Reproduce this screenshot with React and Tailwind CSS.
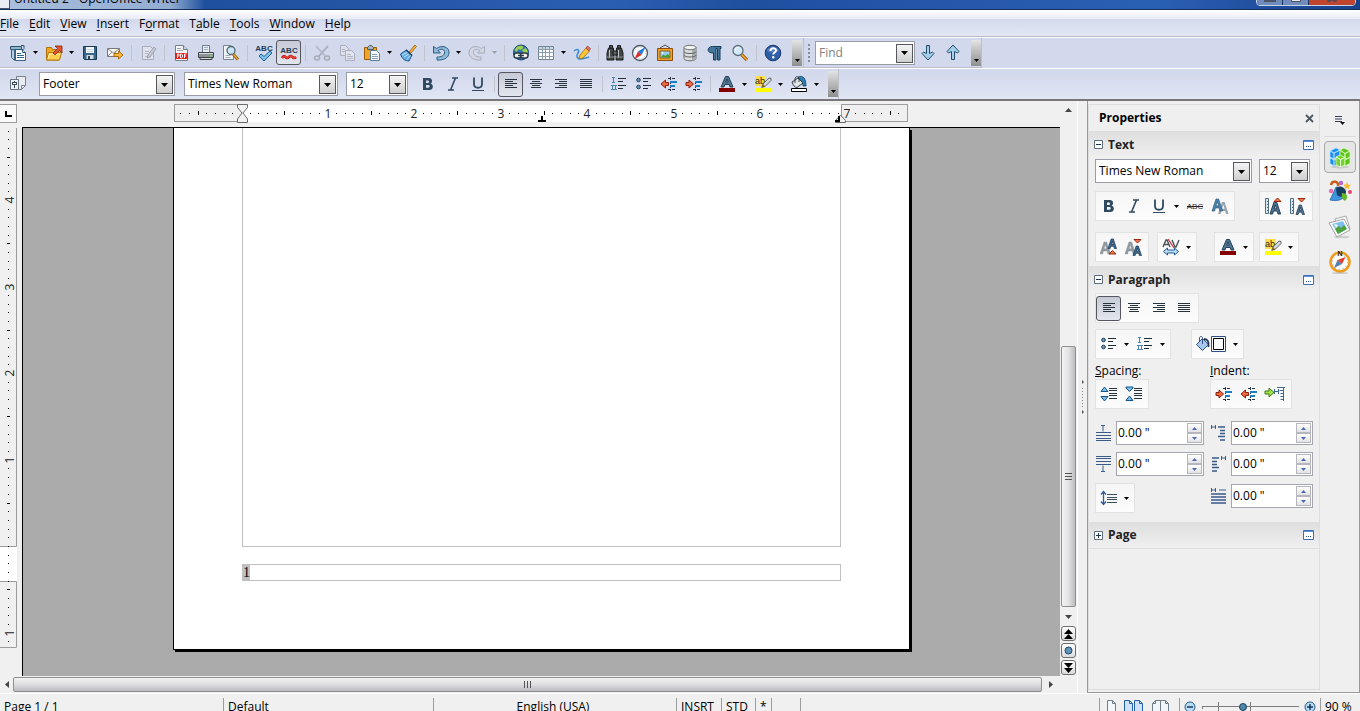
import { useState } from "react";

/* ---------- icons ---------- */

function Svg({ children, w = 18, h = 18 }) {
  return (
    <svg width={w} height={h} viewBox={`0 0 ${w} ${h}`} fill="none" className="block shrink-0" aria-hidden="true">
      {children}
    </svg>
  );
}

const NAVY = "#1f3d58";

const NewDoc = () => (
  <Svg>
    <path d="M6.500 5.500h7l3 3v8h-10z" fill="#fff" stroke="#3c6480" />
    <path d="M13.500 5.500v3h3" fill="#c3d6e3" stroke="#3c6480" />
    <path d="M1.500 2.500h11v3h-11z" fill="#8fb3cc" stroke="#2f556f" />
    <path d="M2.500 6v7.500l3 3v-11z" fill="#b8cfdf" stroke="#3c6480" />
    <path d="M8 9.500h4M8 11.500h7M8 13.500h7" stroke="#2d6a92" />
    <path d="M12 1.500h3v3l-2 2" stroke="#2f556f" />
  </Svg>
);
const OpenFolder = () => (
  <Svg>
    <path d="M1.500 16v-12.500h5l1 2h6.500v10.500z" fill="#f2a81d" stroke="#b06f08" />
    <path d="M1.500 16l2-7.500h13l-2 7.500z" fill="#fdcf4e" stroke="#b87a0e" />
    <path d="M3 14.500L4.500 10h10" stroke="#fff0b0" />
    <path d="M8 9l4.500-4.500-2.500-2.500h7v7l-2.500-2.500L10 11z" fill="#e2562d" stroke="#8c2208" strokeWidth=".8" />
  </Svg>
);
const Save = () => (
  <Svg>
    <path d="M2.500 2.500h13v13h-12l-1-1z" fill="#376788" stroke="#173a54" />
    <path d="M5 3h8v6H5z" fill="#f3f7fa" />
    <path d="M6 5.500h6M6 7.500h6" stroke="#c9d5de" />
    <path d="M5.500 11h7v4h-7z" fill="#d4dade" />
    <path d="M7 12h2v3H7z" fill="#24445c" />
  </Svg>
);
const Mail = () => (
  <Svg>
    <path d="M1.500 4.500h12v8h-12z" fill="#f7f4ee" stroke="#77797c" />
    <path d="M2 5l5.500 4L13 5M2 12l4-4M13 12L9 8" stroke="#8b8d90" />
    <path d="M8 9.500h4.500v-2.500l4.500 4-4.500 4v-2.500H8z" fill="#f9b83a" stroke="#ad6b09" />
  </Svg>
);
const EditDoc = () => (
  <Svg>
    <path d="M3.500 2.500h8l3 3v10h-11z" fill="#dfe2ee" stroke="#a9adba" />
    <path d="M6 7.500h4M6 9.500h3M6 12.500h4" stroke="#b3b7c4" />
    <path d="M15 3l2 2-6 8-3 1 1-3z" fill="#c7cad5" stroke="#9da1ae" />
  </Svg>
);
const Pdf = () => (
  <Svg>
    <path d="M3.500 1.500h8l4 4v11h-12z" fill="#f4f6f8" stroke="#72808c" />
    <path d="M11.500 1.500v4h4" fill="#cbd6de" stroke="#72808c" />
    <path d="M5 4.500h4M5 6.500h6" stroke="#9aa7b1" />
    <path d="M3 9h13v6H3z" fill="#e01f1f" />
    <path d="M5.500 14v-4h1.500v2H6M8.500 10v4h1l1-1v-2l-1-1zM12.500 14v-4h2M12.500 12h1.500" stroke="#fff" strokeWidth=".9" />
  </Svg>
);
const Printer = () => (
  <Svg>
    <path d="M5.500 8V1.500h7V8" fill="#e9f0f5" stroke="#6c7c88" />
    <path d="M7 3.500h4M7 5.500h4" stroke="#9fb0bc" />
    <path d="M1.500 8.500h15v5h-15z" fill="#8d9499" stroke="#3d4549" />
    <path d="M3 13.500h12v2H3z" fill="#d5d8da" stroke="#3d4549" />
    <path d="M2 9.500h14" stroke="#d8dcde" />
    <circle cx="14" cy="12" r="1" fill="#6de03a" />
  </Svg>
);
const Preview = () => (
  <Svg>
    <path d="M1.500 1.500h7l3 3v11h-10z" fill="#f1f5f8" stroke="#75848f" />
    <path d="M3.500 11.500h5M3.500 13.500h5" stroke="#a1afb9" />
    <path d="M11 10l5 5.500" stroke="#8a5a0c" strokeWidth="3" />
    <path d="M11 10l5 5.500" stroke="#f0a62c" strokeWidth="1.500" />
    <circle cx="9" cy="6.500" r="4" fill="#c9e4f5" stroke="#52656f" strokeWidth="1.300" />
  </Svg>
);
const SpellCheck = () => (
  <Svg>
    <text x="9" y="7" textAnchor="middle" fontSize="8" fontWeight="700" fill={NAVY} fontFamily="Liberation Sans, sans-serif">ABC</text>
    <path d="M4 12l2-2 3 2.500L15 7l2 2-8 8z" fill="#7fc2ef" stroke="#1c5a8e" />
  </Svg>
);
const AutoSpell = () => (
  <Svg>
    <text x="9" y="9" textAnchor="middle" fontSize="8" fontWeight="700" fill={NAVY} fontFamily="Liberation Sans, sans-serif">ABC</text>
    <path d="M2 14q2-3 3.500-1t3.500 0 3.500 0 3.500 0" stroke="#b01010" strokeWidth="2.600" />
    <path d="M2 14q2-3 3.500-1t3.500 0 3.500 0 3.500 0" stroke="#f03b2b" strokeWidth="1.300" />
  </Svg>
);
const Cut = () => (
  <Svg>
    <path d="M3 2l9 10M15 2L6 12" stroke="#a7abba" strokeWidth="1.800" />
    <path d="M3 2l9 10" stroke="#d7dae6" strokeWidth=".6" />
    <ellipse cx="4" cy="14" rx="2.500" ry="2" stroke="#a7abba" strokeWidth="1.500" />
    <ellipse cx="14" cy="14" rx="2.500" ry="2" stroke="#a7abba" strokeWidth="1.500" />
  </Svg>
);
const Copy = () => (
  <Svg>
    <path d="M2.500 1.500h5l3 3v7h-8z" fill="#dcdfeb" stroke="#a9adbc" />
    <path d="M7.500 6.500h6l3 3v7h-9z" fill="#e2e5f0" stroke="#a9adbc" />
    <path d="M4 5.500h3M4 7.500h3M9 10.500h4M9 12.500h6M9 14.500h6" stroke="#b3b7c4" />
  </Svg>
);
const Paste = () => (
  <Svg>
    <path d="M1.500 3.500h12v12h-12z" fill="#f0a52a" stroke="#9a5f08" />
    <path d="M4.500 5.500v-2l2-2h2l2 2v2z" fill="#a7b6bf" stroke="#4c5a63" />
    <path d="M7.500 6.500h6l3 3v7h-9z" fill="#f6f9fb" stroke="#5f7c90" />
    <path d="M9 10.500h5M9 12.500h6M9 14.500h6" stroke="#86a0b2" />
  </Svg>
);
const Brush = () => (
  <Svg>
    <path d="M10 8l6-7 1.500 1.500-6 7z" fill="#f5ad36" stroke="#9c6207" strokeWidth=".8" />
    <path d="M1.500 10l6-4 5.500 5-3 6c-4 0-7-2-8.500-7z" fill="#62ace4" stroke="#1c548a" />
    <path d="M3 11l6-3M5 13l5.500-3.500M8 15.500L12 11" stroke="#c5e2f7" />
    <path d="M7 6l6 5.500" stroke="#1c3f66" strokeWidth="1.500" />
  </Svg>
);
const arrowBack = "M1.500 2.500v6.500h7L6 6.500c4-2.500 7-1 6.500 2.500-.5 3-3.500 4-7.500 4v3c6.500.5 11.500-2 12-7 .5-6-7-8.500-12.500-4.500z";
const Undo = () => (
  <Svg>
    <path d={arrowBack} fill="#8fbad8" stroke="#2b5d84" />
  </Svg>
);
const Redo = () => (
  <Svg>
    <g transform="translate(18) scale(-1 1)">
      <path d={arrowBack} fill="#d3d7e3" stroke="#a8acba" />
    </g>
  </Svg>
);
const Globe = () => (
  <Svg>
    <circle cx="9" cy="8.500" r="7.500" fill="#2f77b6" stroke="#1a466f" />
    <path d="M2.500 6c2-4 5-5 8-4l1 2-3 2-2-1-2 3zM10 6l4-2 2 4-2.500 3z" fill="#9ed04a" />
    <rect x="2" y="9" width="7.500" height="5" rx="2.500" fill="#f2f2f2" stroke="#2c3b44" strokeWidth="1.400" />
    <rect x="8.500" y="9" width="7.500" height="5" rx="2.500" fill="#f2f2f2" stroke="#2c3b44" strokeWidth="1.400" />
    <path d="M6 11.500h6" stroke="#2c3b44" strokeWidth="1.500" />
  </Svg>
);
const TableIcon = () => (
  <Svg>
    <path d="M1.500 2.500h15v13h-15z" fill="#fff" stroke="#6f8595" />
    <path d="M2 3h14v3H2z" fill="#c5d4df" />
    <path d="M1.500 5.500h15M1.500 8.500h15M1.500 12.500h15M5.500 2.500v13M8.500 2.500v13M12.500 2.500v13" stroke="#8b9fad" />
  </Svg>
);
const Draw = () => (
  <Svg>
    <path d="M1 7c3-3 6-1 4 2s-1 6 2 6 5-1 9-2" stroke="#3c8fd6" strokeWidth="1.600" />
    <path d="M7 11l6-7 3.500 3-6.500 7-4 1z" fill="#fbc638" stroke="#9d6a08" strokeWidth=".8" />
    <path d="M13 4l1.500-2 3 2.500-1.500 2.500z" fill="#e86f62" stroke="#8f2c1f" strokeWidth=".6" />
  </Svg>
);
const Binoculars = () => (
  <Svg>
    <path d="M2.500 4h5l.5 12H1V9zM15.500 4h-5L10 16h7V9z" fill="#454849" stroke="#191b1c" />
    <path d="M3.500 1.500h3V4h-3zM11.500 1.500h3V4h-3zM7 7h4v4H7z" fill="#5e6263" stroke="#191b1c" />
    <path d="M3.500 6v8M12.500 6v8" stroke="#c4c8c9" />
    <path d="M1 13h7M10 13h7" stroke="#898c8d" />
  </Svg>
);
const Compass = () => (
  <Svg>
    <circle cx="9" cy="9" r="7.500" fill="#fbfcfd" stroke="#4d5a63" strokeWidth="1.300" />
    <circle cx="9" cy="9" r="5.800" stroke="#b8c4cc" strokeDasharray="1 2" />
    <path d="M14.500 3L7 7.500l3.500 3.500z" fill="#1f7be0" />
    <path d="M3.500 15L7 7.500l3.500 3.500z" fill="#dc2a20" />
  </Svg>
);
const Gallery = () => (
  <Svg>
    <path d="M4 4l5-3 5 3" stroke="#4f4f4f" />
    <path d="M1.500 4.500h15v12h-15z" fill="#eda334" stroke="#8c4f05" />
    <path d="M4 7h10v7H4z" fill="#8fcbf2" stroke="#9a5b08" />
    <path d="M4.500 13.500l3-3 2 1.500 2-2 2.500 2v1.500z" fill="#4a9a2b" />
    <circle cx="6.500" cy="8.800" r="1" fill="#fff" />
  </Svg>
);
const Database = () => (
  <Svg>
    <path d="M3 3.500v11c0 3 12 3 12 0v-11" fill="#dcdddd" stroke="#6e7172" />
    <path d="M11 4v12.500c2-.4 4-1 4-2v-11z" fill="#a8abac" />
    <ellipse cx="9" cy="3.500" rx="6" ry="2.200" fill="#f4f5f5" stroke="#6e7172" />
    <path d="M3 7.500c0 2.700 12 2.700 12 0M3 11c0 2.700 12 2.700 12 0" stroke="#5f6263" />
  </Svg>
);
const Pilcrow = () => (
  <Svg>
    <path d="M6.500 2.500H15v2h-1v11.500h-2.500V4.500h-1.500v11.500H7.500V9C0 9.500 1 2.500 6.500 2.500z" fill="#44779e" stroke="#173a58" />
  </Svg>
);
const Zoom = () => (
  <Svg>
    <path d="M10.500 10.500l5.500 5.500" stroke="#8f5b0a" strokeWidth="3.200" />
    <path d="M10.500 10.500l5.500 5.500" stroke="#f3aa30" strokeWidth="1.600" />
    <circle cx="7" cy="6.500" r="5" fill="#d4eafa" stroke="#5c6f7c" strokeWidth="1.300" />
    <path d="M4 6c.5-2 2-2.500 3.500-2.500" stroke="#fff" />
  </Svg>
);
const Help = () => (
  <Svg>
    <circle cx="9" cy="9" r="7.800" fill="#2f5ea9" stroke="#18376c" />
    <path d="M3 7c1-5 11-5 12 0-4 2-8 2-12 0z" fill="#7396cc" opacity=".6" />
    <path d="M6.500 7c0-3.500 5.500-3.500 5.500-.5 0 2-2.800 2-2.800 4" stroke="#fff" strokeWidth="1.900" />
    <circle cx="9.200" cy="13.200" r="1.200" fill="#fff" />
  </Svg>
);
const FindArrow = ({ up }) => (
  <Svg>
    <g transform={up ? "translate(0 17) scale(1 -1)" : undefined}>
      <path d="M7.500 1.500h3v8l3-1.500 1.500 1.500-6 6.500-6-6.500L4.500 8l3 1.500z" fill="#a5d0ec" stroke="#234c69" />
    </g>
  </Svg>
);
const StylesIcon = () => (
  <Svg>
    <path d="M7.500 1.500h9v9l-4 4h-5z" fill="#e8ecf1" stroke="#76838e" />
    <path d="M12.500 14.500v-4h4" stroke="#76838e" />
    <path d="M1.500 4.500h8v10h-8z" fill="#eef2f5" stroke="#66747f" />
    <path d="M3 7h5v3H3zM5 6h1v7H5z" fill="#3e4c57" />
    <path d="M4 8h3v1H4z" fill="#fff" />
  </Svg>
);
const Bold = () => (
  <Svg>
    <path fillRule="evenodd" d="M4 3h6c3.500 0 4 4.500 1.500 5.500C15 9.500 14.500 15 10.500 15H4zM7 5.500v2.500h2c1.600 0 1.600-2.500 0-2.500zM7 10v2.700h2.400c1.700 0 1.700-2.700 0-2.700z" fill="#2f4a60" />
  </Svg>
);
const Italic = () => (
  <Svg>
    <path d="M8 3h6M4 15h6M11.500 3L6.500 15" stroke="#2f4a60" strokeWidth="1.600" />
  </Svg>
);
const Underline = () => (
  <Svg>
    <path d="M5 2.500v6.500c0 5 8 5 8 0V2.500" stroke="#2f4a60" strokeWidth="1.800" />
    <path d="M3 15.500h12" stroke="#2f4a60" />
  </Svg>
);

const ALIGN_ROWS = {
  left: [[3, 15], [3, 11], [3, 15], [3, 11], [3, 15]],
  center: [[3, 15], [5, 13], [3, 15], [5, 13], [4, 14]],
  right: [[3, 15], [7, 15], [3, 15], [7, 15], [3, 15]],
  justify: [[3, 15], [3, 15], [3, 15], [3, 15], [3, 15]],
};
const Align = ({ kind }) => (
  <Svg>
    {ALIGN_ROWS[kind].map(([a, b], i) => (
      <path key={i} d={`M${a} ${4.5 + i * 2}H${b}`} stroke="#26333d" strokeWidth="1" />
    ))}
  </Svg>
);
const Numbering = () => (
  <Svg>
    <path d="M2 2.500h3M3.500 2.500v5M2 7.500h3M1 10.500h6M1 14.500h6M2.500 10.500v4M5.500 10.500v4" stroke="#4b83ab" />
    <path d="M8 3.500h8M8 6.500h5M8 10.500h8M8 13.500h5" stroke="#1d2b35" />
  </Svg>
);
const Bullets = () => (
  <Svg>
    <circle cx="3.500" cy="5" r="1.800" fill="#6a9fc4" stroke="#1b3a52" />
    <circle cx="3.500" cy="12" r="1.800" fill="#6a9fc4" stroke="#1b3a52" />
    <path d="M8 3.500h8M8 6.500h5M8 10.500h8M8 13.500h5" stroke="#1d2b35" />
  </Svg>
);
const Indent = ({ dir }) => (
  <Svg>
    <path d="M8 3.500h8M8 14.500h8M10.500 2v14" stroke="#26333d" strokeDasharray="3 1" />
    <path d="M10 7h7M10 11h5" stroke="#1b7fc4" strokeWidth="2" />
    <path d={dir === "in" ? "M1 7.500h3V5l4.500 4L4 13v-2.500H1z" : "M8.500 7.500H5.500V5L1 9l4.500 4v-2.500h3z"} fill="#ee6a42" stroke="#8c1f0a" />
  </Svg>
);
const FontColor = () => (
  <Svg>
    <path d="M3 12L7.500 1.500h3L15 12h-3l-.8-2.500H6.800L6 12zM7.800 7h2.400L9 3.800z" fill="#4f7796" stroke="#183249" strokeWidth=".9" />
    <path d="M1 13h16v4H1z" fill="#840000" />
  </Svg>
);
const Highlight = () => (
  <Svg>
    <path d="M1 1h11v10H1z" fill="#ffe04a" />
    <path d="M1 13h16v4H1z" fill="#ffff00" />
    <text x="1" y="9" fontSize="9" fill="#222" fontFamily="Liberation Sans, sans-serif">ab</text>
    <path d="M8 12l1-3 6-6 2 .5v2l-6 6z" fill="#d6d9db" stroke="#4f575c" strokeWidth=".9" />
    <path d="M7 13l2-4 2.500 2.500z" fill="#8a6d1c" />
  </Svg>
);
const BackColor = () => (
  <Svg>
    <path d="M8 2c5-2 8 1 8 9h-3c0-3-1-5-3-6z" fill="#2d7fb8" stroke="#133f60" strokeWidth=".8" />
    <path d="M2 7l6-4 5 5-6 4.500c-2 0-4-2-5-5.500z" fill="#dfe3e6" stroke="#363e43" />
    <path d="M5 8V4c0-3 4-3 4 0v3" stroke="#363e43" />
    <path d="M1.500 13.500h15v3h-15z" fill="#fff" stroke="#000" />
  </Svg>
);
const Strike = () => (
  <Svg>
    <text x="9" y="12" textAnchor="middle" fontSize="8" fill="#333" fontFamily="Liberation Sans, sans-serif">ABC</text>
    <path d="M1 9.500h16" stroke="#222" />
  </Svg>
);
const letterA = "M0 12L4 0h2.600L10.600 12H8L7.200 9H3.400L2.600 12zM4 6.800h2.600L5.300 2.800z";
const Shadow = () => (
  <Svg>
    <path transform="translate(7 5)" d={letterA} fill="#9aa5ad" />
    <path transform="translate(1 2)" d={letterA} fill="#4a83ad" stroke="#274f6d" strokeWidth=".6" />
  </Svg>
);
const GrowFont = ({ down }) => (
  <Svg>
    <path d="M1.500 1.500h3v15h-3z" fill="#dce7ee" stroke="#4d6f86" />
    <path d="M3 4.500h1M3 7.500h1M3 10.500h1M3 13.500h1" stroke="#4d6f86" />
    <path transform={down ? "translate(7 8) scale(.8)" : "translate(6 5)"} d={letterA} fill="#4f7796" stroke="#183249" strokeWidth=".9" />
    <path d={down ? "M9 1.500h7l-3.500 3.500z" : "M10 4.500h7l-3.500-3.500z"} fill="#f2784c" stroke="#a02a0c" />
  </Svg>
);
const Script = ({ down }) => (
  <Svg>
    <path transform="translate(0 4)" d={letterA} fill="#8f989f" stroke="#8f989f" strokeWidth=".5" />
    <path transform={down ? "translate(8 8) scale(.8)" : "translate(8 1) scale(.8)"} d={letterA} fill="#3b6f98" stroke="#183249" strokeWidth=".9" />
    <path d={down ? "M9 1.500h7l-3.500 3.500z" : "M9 16h7l-3.500-3.500z"} fill="#f2784c" stroke="#a02a0c" />
  </Svg>
);
const Kerning = () => (
  <Svg>
    <path d="M1 9l3-7h1l3 7M2.500 6.500h4M10 2l3 7h1l3-7" stroke="#46515a" strokeWidth="1.400" />
    <path d="M6 1l6 9" stroke="#d8262c" strokeWidth="1.200" />
    <path d="M1.500 13.500l4-3.500v2h7v-2l4 3.500-4 3.500v-2h-7v2z" fill="#bcdcf4" stroke="#225b93" />
  </Svg>
);
const FillBucket = () => (
  <Svg w={32}>
    <path d="M1.500 9.500l6-6 6 6-6 6z" fill="#a8c8f0" stroke="#2f5687" />
    <path d="M7.500 9V3c0-2-3-2-3 0v3" stroke="#2f5687" />
    <path d="M9 4c4 0 5 3 4.500 8" stroke="#223a55" strokeWidth="1.800" />
    <path d="M16.500 1.500h14v15h-14z" fill="#fff" stroke="#2f4f8a" />
    <path d="M18.500 3.500h10v11h-10z" stroke="#000" />
  </Svg>
);
const ParaSpacing = ({ dec }) => (
  <Svg>
    <path d={dec ? "M1 2h7v1L4.500 6.500 1 3z" : "M1 6.500L4.500 2 8 6.500z"} fill="#7cbdec" stroke="#155489" />
    <path d={dec ? "M1 15.500L4.500 11 8 15.500z" : "M1 11.500h7L4.500 16z"} fill="#7cbdec" stroke="#155489" />
    <path d="M9 3.500h8M9 5.500h8M9 8.500h8M9 10.500h8M9 13.500h8" stroke="#26333d" />
  </Svg>
);
const HangIndent = () => (
  <Svg w={22}>
    <path d="M1 6h4V3l5 4.500L5 12V9H1z" fill="#9fe04a" stroke="#3c7d0c" />
    <path d="M10.500 4v5M10.500 6.500h4M14.500 4v5M13 2.500h8M19.500 2v14M15.500 5.500h4M16.500 8.500h3M16.500 11.500h3M16.500 14.500h3" stroke="#3d6893" />
  </Svg>
);
const SpaceAbove = ({ below }) => (
  <Svg>
    <g transform={below ? "translate(0 18) scale(1 -1)" : undefined}>
      <path d="M6 1.500h4M8 1.500v6" stroke="#34608f" />
      <path d="M1 8.500h15M1 11.500h15M1 14.500h15M1 16.500h15" stroke="#3a5a8a" />
    </g>
  </Svg>
);
const BeforeText = ({ after }) => (
  <Svg>
    <g transform={after ? "translate(17) scale(-1 1)" : undefined}>
      <path d="M1.500 1v4M1.500 3h4M5.500 1v4" stroke="#34608f" />
      <path d="M8 3h7M10 6.500h5M10 9.500h5M8 12.500h7M10 16h5" stroke="#3a5a8a" strokeWidth="1.500" />
    </g>
  </Svg>
);
const FirstLine = () => (
  <Svg>
    <path d="M1.500 1v4M1.500 3h4M5.500 1v4M9 3h7" stroke="#34608f" />
    <path d="M1 7h15M1 10h15M1 13h15M1 16h15" stroke="#3a5a8a" strokeWidth="1.500" />
  </Svg>
);
const LineSpacing = () => (
  <Svg>
    <path d="M3.500 3v12M1 5.500l2.500-3 2.500 3M1 12.500l2.500 3 2.500-3" stroke="#2c5f98" strokeWidth="1.300" />
    <path d="M7 5.500h10M7 8.500h10M7 10.500h10M7 13.500h10" stroke="#3d4e5b" />
  </Svg>
);

/* tab bar icons, 24px */
const Cubes = () => (
  <Svg w={24} h={24}>
    <ellipse cx="12" cy="22" rx="9" ry="1.500" fill="#c9c9c9" />
    <path d="M2 6l6-3 4 2-6 3zM2 6l4 2v6l-4-2zM6 8l6-3v6l-6 3z" fill="#1b8ff0" stroke="#bfe2ff" strokeWidth=".7" />
    <path d="M12 5l4-2 6 3-5 2.500zM12 5l5 3.500v5.500l-5-3zM17 8.500L22 6v6l-5 2.500z" fill="#5cc41c" stroke="#e0ffc4" strokeWidth=".7" />
    <path d="M2 13l4 2v6l-4-2.500zM6 15l3-1.500v6.500L6 21z" fill="#1b8ff0" stroke="#bfe2ff" strokeWidth=".7" />
    <path d="M8 12l4-2 5 2.500-4.500 2zM8 12l4.500 2.500V22L8 20zM12.500 14.500l4.500-2v7.500l-4.500 2z" fill="#72d42c" stroke="#efffdc" strokeWidth=".7" />
    <path d="M17 15l5-2.500v6l-5 2.500z" fill="#5cc41c" stroke="#e0ffc4" strokeWidth=".7" />
  </Svg>
);
const StylesTab = () => (
  <Svg w={24} h={24}>
    <path d="M2 20L8 7c5 0 9 6 7 11-3 3-9 3-13 2z" fill="#3e95dc" stroke="#1a5a99" strokeWidth=".7" />
    <path d="M8 9c2-5 10-2 10 3s-6 6-9 3z" fill="#173d60" />
    <path d="M14 13c5 0 7 4 3 8-2-1-4-3-3-8z" fill="#69b52c" />
    <path d="M3 5c1-5 8-4 7 1" stroke="#c95d18" strokeWidth="2.500" />
    <circle cx="13" cy="3" r="2.200" fill="#b565d8" />
    <circle cx="3" cy="11" r="2.200" fill="#ee6fb1" />
    <circle cx="22" cy="12" r="2" fill="#e8456c" />
    <path d="M19 2l1.200 2.500 2.800.3-2 2 .5 2.700L19 8l-2.500 1.500.5-2.700-2-2 2.800-.3z" fill="#f8bc3a" />
  </Svg>
);
const GalleryTab = () => (
  <Svg w={24} h={24}>
    <ellipse cx="14" cy="22" rx="8" ry="1.300" fill="#cfcfcf" />
    <path d="M7 4l11-3 4 13-11 3z" fill="#fff" stroke="#a9a9a9" />
    <path d="M1 8l15-4 6 11-13 7z" fill="#fff" stroke="#9f9f9f" />
    <path d="M4 9l11-3 4 8-9 5z" fill="#7dc0ee" />
    <path d="M7 14l4-3 2 2 3-3 3 4-9 5z" fill="#4da33a" />
    <path d="M6 9l4 1-2 3z" fill="#fff" />
  </Svg>
);
const NavigatorTab = () => (
  <Svg w={24} h={24}>
    <ellipse cx="12" cy="23" rx="8" ry="1" fill="#c9c9c9" />
    <circle cx="12" cy="12" r="9.500" fill="#fdfdfd" stroke="#f09a1c" strokeWidth="2.500" />
    <circle cx="12" cy="12" r="7.500" stroke="#8d8d8d" strokeDasharray="1 3" />
    <path d="M17.500 7l-8 3 4.500 4z" fill="#e33c2b" />
    <path d="M6 18l3.500-8 4.500 4z" fill="#5b7fa8" />
    <text x="12" y="6" textAnchor="middle" fontSize="7" fontWeight="700" fill="#222" fontFamily="Liberation Sans, sans-serif">N</text>
  </Svg>
);

/* ---------- small controls ---------- */

function Tool({ label, children, active }) {
  return (
    <button
      type="button"
      aria-label={label}
      className={`grid h-[25px] w-[25px] shrink-0 place-items-center rounded-[3px] border ${
        active ? "border-[#55555d] bg-gradient-to-b from-[#c6cad6] to-[#e3e6ee]" : "border-transparent"
      }`}
    >
      {children}
    </button>
  );
}

function Drop({ label, muted }) {
  return (
    <button type="button" aria-label={label} className="grid h-[25px] w-[11px] shrink-0 place-items-center">
      <Svg w={5} h={3}>
        <path d="M0 0h5L2.500 3z" fill={muted ? "#9a9eab" : "#000"} />
      </Svg>
    </button>
  );
}

const Sep = () => (
  <span className="flex h-4 w-2 shrink-0 justify-center">
    <span className="w-px bg-[#c2c4cd]" />
  </span>
);

const More = ({ className = "" }) => (
  <button
    type="button"
    aria-label="More controls"
    className={`flex h-[26px] w-[10px] shrink-0 items-end justify-center bg-gradient-to-b from-[#e4e4e4] to-[#8f8f8f] pb-1 ${className}`}
  >
    <Svg w={5} h={3}>
      <path d="M0 0h5L2.500 3z" fill="#000" />
    </Svg>
  </button>
);

const Arrow = () => (
  <Svg w={7} h={4}>
    <path d="M0 0h7L3.500 4z" fill="#000" />
  </Svg>
);
const arrowBox = "grid h-[19px] w-[17px] place-items-center border border-[#55585c] bg-gradient-to-b from-[#f4f4f4] to-[#cfcfcf]";

function Combo({ label, value, className }) {
  return (
    <div className={`relative h-6 shrink-0 border border-[#9a9da8] bg-white ${className}`}>
      <select aria-label={label} defaultValue={value} className="h-full w-full appearance-none bg-transparent pl-[3px] pr-5 text-black outline-none">
        <option>{value}</option>
      </select>
      <span className={`pointer-events-none absolute right-px top-[2px] ${arrowBox}`}>
        <Arrow />
      </span>
    </div>
  );
}

function Spin({ label, className }) {
  const [n, setN] = useState(0);
  const btn = "grid flex-1 place-items-center border border-[#b5b7bc] bg-gradient-to-b from-white to-[#e2e2e6]";
  return (
    <div className={`flex h-6 border border-[#a3a6ae] bg-white p-px ${className}`}>
      <input
        aria-label={label}
        value={`${n.toFixed(2)} "`}
        onChange={(e) => setN(parseFloat(e.target.value) || 0)}
        className="w-0 min-w-0 flex-1 text-black outline-none"
      />
      <div className="flex w-[15px] flex-col">
        <button type="button" aria-label={`Increase ${label}`} className={btn} onClick={() => setN(n + 0.1)}>
          <Svg w={5} h={3}><path d="M0 3h5L2.500 0z" fill="#5066b0" /></Svg>
        </button>
        <button type="button" aria-label={`Decrease ${label}`} className={btn} onClick={() => setN(Math.max(0, n - 0.1))}>
          <Svg w={5} h={3}><path d="M0 0h5L2.500 3z" fill="#5066b0" /></Svg>
        </button>
      </div>
    </div>
  );
}

/* ---------- top bars ---------- */

const MENUS = [
  ["", "F", "ile"],
  ["", "E", "dit"],
  ["", "V", "iew"],
  ["", "I", "nsert"],
  ["F", "o", "rmat"],
  ["T", "a", "ble"],
  ["", "T", "ools"],
  ["", "W", "indow"],
  ["", "H", "elp"],
];

function TitleBar() {
  return (
    <header className="flex h-[10px] shrink-0 items-end justify-between overflow-hidden border-b border-[#16305c] bg-[linear-gradient(90deg,#a9bfdc_0,#93add2_170px,#1f4f9f_205px,#2a5fb0_45%,#1f4f9f_55%,#2a60b4_85%,#17408a)]">
      <div className="flex h-5 items-center gap-1">
        <span className="mt-1 h-4 w-[10px] border border-l-0 border-[#45566a] bg-[#e8eef4]" />
        <h1 className="text-xs leading-4 text-black">Untitled 2 - OpenOffice Writer</h1>
      </div>
      <div className="mb-[3px] mr-1 flex h-5 overflow-hidden rounded-b border border-[#c6d3ea]">
        <button type="button" aria-label="Minimize" className="flex w-[26px] items-end justify-center border-r border-[#1d3563] bg-[#6f8cbc] pb-[3px]">
          <span className="h-1 w-3 bg-[#4c5566]" />
        </button>
        <button type="button" aria-label="Maximize" className="flex w-[26px] items-end justify-center border-r border-[#1d3563] bg-[#6f8cbc] pb-[3px]">
          <span className="h-2 w-[10px] border border-[#4c5566] bg-[#e8e8e8]" />
        </button>
        <button type="button" aria-label="Close" className="flex w-[46px] items-end justify-center bg-[#c0452f] pb-[3px]">
          <Svg w={10} h={8}><path d="M1 0l8 8M9 0L1 8" stroke="#5a4a52" strokeWidth="3" /></Svg>
        </button>
      </div>
    </header>
  );
}

function MenuBar() {
  return (
    <nav className="flex h-[27px] shrink-0 gap-[10px] border-b border-[#b4b9cd] bg-[linear-gradient(#fff_0,#e8ebf6_9px,#d3d9ec_9px,#e3e7f5)] text-black">
      {MENUS.map(([a, b, c]) => (
        <button type="button" key={a + b + c} className="leading-7">
          {a}
          <span className="underline underline-offset-2">{b}</span>
          {c}
        </button>
      ))}
    </nav>
  );
}

function StandardBar() {
  return (
    <div className="flex h-[31px] shrink-0 border-t border-white">
      <div className="flex items-center border-b border-r border-[#bcbfca] pl-[5px]">
        <Tool label="New"><NewDoc /></Tool>
        <Drop label="New menu" />
        <Tool label="Open"><OpenFolder /></Tool>
        <Drop label="Open menu" />
        <Tool label="Save"><Save /></Tool>
        <Tool label="E-mail"><Mail /></Tool>
        <Sep />
        <Tool label="Edit file"><EditDoc /></Tool>
        <Sep />
        <Tool label="Export as PDF"><Pdf /></Tool>
        <Tool label="Print"><Printer /></Tool>
        <Tool label="Page preview"><Preview /></Tool>
        <Sep />
        <Tool label="Spelling"><SpellCheck /></Tool>
        <Tool label="AutoSpellcheck" active><AutoSpell /></Tool>
        <Sep />
        <Tool label="Cut"><Cut /></Tool>
        <Tool label="Copy"><Copy /></Tool>
        <Tool label="Paste"><Paste /></Tool>
        <Drop label="Paste menu" />
        <Tool label="Format paintbrush"><Brush /></Tool>
        <Sep />
        <Tool label="Undo"><Undo /></Tool>
        <Drop label="Undo menu" />
        <Tool label="Redo"><Redo /></Tool>
        <Drop label="Redo menu" muted />
        <Sep />
        <Tool label="Hyperlink"><Globe /></Tool>
        <Tool label="Table"><TableIcon /></Tool>
        <Drop label="Table menu" />
        <Tool label="Draw functions"><Draw /></Tool>
        <Sep />
        <Tool label="Find and replace"><Binoculars /></Tool>
        <Tool label="Navigator"><Compass /></Tool>
        <Tool label="Gallery"><Gallery /></Tool>
        <Tool label="Data sources"><Database /></Tool>
        <Tool label="Nonprinting characters"><Pilcrow /></Tool>
        <Tool label="Zoom"><Zoom /></Tool>
        <Sep />
        <Tool label="Help"><Help /></Tool>
        <More className="ml-[7px] mr-px" />
      </div>
      <div className="flex items-center border-b border-r border-[#bcbfca] pl-1">
        <span className="mr-[5px] h-[18px] border-l-2 border-dotted border-[#8a8d98]" />
        <div className="relative h-6 w-[100px] border border-[#9a9da8] bg-white">
          <input aria-label="Find" placeholder="Find" className="h-full w-full bg-transparent pl-[3px] pr-5 outline-none placeholder:text-[#808080]" />
          <button type="button" aria-label="Find history" className={`absolute right-px top-[2px] ${arrowBox}`}>
            <Arrow />
          </button>
        </div>
        <Tool label="Find next"><FindArrow /></Tool>
        <Tool label="Find previous"><FindArrow up /></Tool>
        <More className="ml-[6px]" />
      </div>
    </div>
  );
}

function FormatBar() {
  return (
    <div className="flex h-[31px] shrink-0 border-t border-white">
      <div className="flex items-center border-r border-[#bcbfca] pl-[5px]">
        <Tool label="Styles and formatting"><StylesIcon /></Tool>
        <Combo label="Apply style" value="Footer" className="ml-[9px] w-[136px]" />
        <Combo label="Font name" value="Times New Roman" className="ml-[9px] w-[154px]" />
        <Combo label="Font size" value="12" className="ml-2 mr-[7px] w-[62px]" />
        <Tool label="Bold"><Bold /></Tool>
        <Tool label="Italic"><Italic /></Tool>
        <Tool label="Underline"><Underline /></Tool>
        <Sep />
        <Tool label="Align left" active><Align kind="left" /></Tool>
        <Tool label="Centered"><Align kind="center" /></Tool>
        <Tool label="Align right"><Align kind="right" /></Tool>
        <Tool label="Justified"><Align kind="justify" /></Tool>
        <Sep />
        <Tool label="Numbering"><Numbering /></Tool>
        <Tool label="Bullets"><Bullets /></Tool>
        <Tool label="Decrease indent"><Indent dir="out" /></Tool>
        <Tool label="Increase indent"><Indent dir="in" /></Tool>
        <Sep />
        <Tool label="Font color"><FontColor /></Tool>
        <Drop label="Font color menu" />
        <Tool label="Highlighting"><Highlight /></Tool>
        <Drop label="Highlighting menu" />
        <Tool label="Background color"><BackColor /></Tool>
        <Drop label="Background color menu" />
        <More className="ml-[6px]" />
      </div>
    </div>
  );
}

/* ---------- document ---------- */

const INCH = 86.5;

function HRuler() {
  const ticks = [];
  for (let i = -7; i <= 76; i++) if (i % 10 !== 0) ticks.push(i);
  const x = (i) => Math.round(67 + (i * INCH) / 10);
  return (
    <svg width="735" height="23" className="mx-auto block" aria-hidden="true">
      <rect x="67" y="1" width="600" height="17" fill="#fff" />
      <rect x=".5" y=".5" width="67" height="17" fill="#efefef" stroke="#9c9c9c" />
      <rect x="667.500" y=".5" width="66" height="17" fill="#efefef" stroke="#9c9c9c" />
      {ticks.map((i) => (
        <rect key={i} x={x(i)} y={i % 5 === 0 ? 7 : 9} width="1" height={i % 5 === 0 ? 4 : 1} fill="#000" />
      ))}
      {[1, 2, 3, 4, 5, 6, 7].map((n) => (
        <text key={n} x={x(n * 10)} y="14" textAnchor="middle" fontSize="12" fill="#222">{n}</text>
      ))}
      <path d="M63.500.5h10v3l-4.500 5.500 4.500 6v3.500h-10V15l4.500-6-4.500-5.500z" fill="#f2f2f2" stroke="#6a6a6a" />
      <path d="M364 16h3v-4h2v4h3v2h-8z" fill="#000" />
      <path d="M661.500 18.500v-2l5-5.500 5 5.500v2z" fill="#f2f2f2" stroke="#6a6a6a" />
      <path d="M661 18v-2h3v-4h2v6z" fill="#000" />
    </svg>
  );
}

function VRuler() {
  const ticks = [];
  for (let i = -48; i <= 11; i++) if (i % 10 !== 0 || i === 0) ticks.push(i);
  const y = (i) => Math.round(419 + (i * INCH) / 10);
  return (
    <svg width="22" height="522" className="block shrink-0" aria-hidden="true">
      <path d="M16.500 1v418.500H0M0 454.500h16.500v66H0" stroke="#9c9c9c" fill="none" />
      <rect x="0" y="420" width="17" height="34" fill="#fff" />
      {ticks.map((i) => (
        <rect key={i} x={i % 5 === 0 && i !== 0 ? 7 : 8} y={y(i)} width={i % 5 === 0 && i !== 0 ? 3 : 1} height="1" fill="#000" />
      ))}
      {[-4, -3, -2, -1, 1].map((n) => (
        <text key={n} transform={`translate(14 ${y(n * 10)}) rotate(-90)`} textAnchor="middle" fontSize="12" fill="#222">
          {Math.abs(n)}
        </text>
      ))}
    </svg>
  );
}

const navBtn = "grid h-[15px] w-[15px] place-items-center rounded-[3px] border border-[#6e6e6e] bg-gradient-to-b from-white to-[#dcdcdc]";

function VScroll() {
  return (
    <div className="flex w-[17px] shrink-0 flex-col items-center bg-[#f0f0f0]">
      <button type="button" aria-label="Scroll up" className="grid h-[18px] w-full place-items-center">
        <Svg w={7} h={4}><path d="M0 4h7L3.500 0z" fill="#444" /></Svg>
      </button>
      <div className="flex min-h-0 w-full flex-1 flex-col items-center">
        <div className="flex-1" />
        <div className="grid h-[261px] w-[15px] place-items-center rounded-[2px] border border-[#8f8f8f] bg-gradient-to-r from-[#f3f3f3] via-[#e2e2e4] to-[#bcbcc0]">
          <Svg w={7} h={8}><path d="M0 .5h7M0 3.500h7M0 6.500h7" stroke="#555" /></Svg>
        </div>
      </div>
      <button type="button" aria-label="Scroll down" className="grid h-[19px] w-full place-items-center">
        <Svg w={7} h={4}><path d="M0 0h7L3.500 4z" fill="#444" /></Svg>
      </button>
      <div className="flex flex-col gap-[2px] pb-[18px]">
        <button type="button" aria-label="Previous page" className={navBtn}>
          <Svg w={9} h={10}><path d="M0 5h9L4.500 0zM0 10h9L4.500 5z" fill="#000" /></Svg>
        </button>
        <button type="button" aria-label="Navigation" className={navBtn}>
          <Svg w={9} h={9}><circle cx="4.500" cy="4.500" r="3.500" fill="#5f93b8" stroke="#1e4a6b" /></Svg>
        </button>
        <button type="button" aria-label="Next page" className={navBtn}>
          <Svg w={9} h={10}><path d="M0 0h9L4.500 5zM0 5h9L4.500 10z" fill="#000" /></Svg>
        </button>
      </div>
    </div>
  );
}

function HScroll() {
  return (
    <div className="flex h-[17px] shrink-0 items-start bg-[#f0f0f0] pt-px">
      <button type="button" aria-label="Scroll left" className="grid h-[15px] w-[13px] place-items-center">
        <Svg w={4} h={7}><path d="M4 0v7L0 3.500z" fill="#444" /></Svg>
      </button>
      <div className="grid h-[15px] flex-1 place-items-center rounded-[2px] border border-[#8f8f8f] bg-gradient-to-b from-[#f3f3f3] via-[#dedee0] to-[#bcbcc0]">
        <Svg w={8} h={7}><path d="M.5 0v7M3.500 0v7M6.500 0v7" stroke="#555" /></Svg>
      </div>
      <button type="button" aria-label="Scroll right" className="grid h-[15px] w-[18px] place-items-center">
        <Svg w={4} h={7}><path d="M0 0v7l4-3.500z" fill="#444" /></Svg>
      </button>
    </div>
  );
}

function Editor() {
  return (
    <main className="flex min-w-0 flex-1 flex-col pt-[3px]">
      <div className="flex h-[23px] shrink-0">
        <div className="w-[23px] shrink-0">
          <button type="button" aria-label="Tab type" className="grid h-[19px] w-[17px] place-items-center border border-l-0 border-[#9c9c9c] bg-[#fafafa]">
            <Svg w={7} h={6}><path d="M0 0h2v4h5v2H0z" fill="#000" /></Svg>
          </button>
        </div>
        <div className="min-w-0 flex-1">
          <HRuler />
        </div>
      </div>
      <div className="flex min-h-0 flex-1">
        <VRuler />
        <div className="flex min-w-0 flex-1 flex-col border-l border-t border-black bg-[#ababab]">
          <div className="mx-auto mb-[26px] flex w-[737px] flex-1 flex-col border-x border-b border-black bg-white pb-[68px] pl-[68px] pr-[68px] shadow-[2px_2px_0_#000]">
            <div className="flex-1 border border-t-0 border-[#c0c0c0]" />
            <div className="mt-[17px] flex h-[17px] border border-[#c0c0c0]">
              <span className="bg-[#c0c0c0] font-['Liberation_Serif',serif] text-sm leading-4 text-black">1</span>
            </div>
          </div>
        </div>
      </div>
      <HScroll />
    </main>
  );
}

/* ---------- sidebar ---------- */

function SectionHead({ title, open, className = "" }) {
  return (
    <div className={`flex h-[27px] items-center justify-between bg-gradient-to-b from-[#dedede] to-[#f0f0f0] pl-[5px] pr-[5px] ${className}`}>
      <button type="button" aria-expanded={open} className="flex items-center gap-[5px]">
        <Svg w={9} h={9}>
          <path d="M.5.5h8v8h-8z" fill="#fff" stroke="#5c6f80" />
          <path d={open ? "M2 4.500h5" : "M2 4.500h5M4.500 2v5"} stroke="#1f3448" />
        </Svg>
        <h3 className="font-bold leading-4 text-[#222]">{title}</h3>
      </button>
      <button type="button" aria-label={`${title} options`}>
        <Svg w={11} h={10}>
          <path d="M.5.5h10v9H.5z" fill="#fff" stroke="#3d6fb5" />
          <path d="M1 1.500h9" stroke="#5b94dc" />
          <path d="M3 6.500h1M5 6.500h1M7 6.500h1" stroke="#2b4d80" />
        </Svg>
      </button>
    </div>
  );
}

function Group({ children, className = "" }) {
  return <div className={`flex h-[30px] items-center border border-[#e2e2e2] bg-gradient-to-b from-[#f6f6f6] to-[#fcfcfc] pr-[2px] ${className}`}>{children}</div>;
}

function Properties() {
  return (
    <section className="mb-[2px] mt-[3px] flex w-[232px] flex-col border border-[#dedede]">
      <div className="flex h-[26px] items-center justify-between pl-[10px] pr-[5px]">
        <h2 className="font-bold text-black">Properties</h2>
        <button type="button" aria-label="Close sidebar">
          <Svg w={9} h={9}><path d="M1 1l7 7M8 1L1 8" stroke="#4c5660" strokeWidth="1.800" /></Svg>
        </button>
      </div>

      <SectionHead title="Text" open />
      <div className="flex flex-col pl-[6px] pt-px">
        <div className="flex gap-[7px]">
          <Combo label="Font" value="Times New Roman" className="w-[157px]" />
          <Combo label="Size" value="12" className="w-[51px]" />
        </div>
        <div className="mt-2 flex gap-6">
          <Group>
            <Tool label="Bold"><Bold /></Tool>
            <Tool label="Italic"><Italic /></Tool>
            <Tool label="Underline"><Underline /></Tool>
            <Drop label="Underline style" />
            <Tool label="Strikethrough"><Strike /></Tool>
            <Tool label="Shadow"><Shadow /></Tool>
          </Group>
          <Group>
            <Tool label="Increase font"><GrowFont /></Tool>
            <Tool label="Reduce font"><GrowFont down /></Tool>
          </Group>
        </div>
        <div className="mb-1 mt-[11px] flex">
          <Group>
            <Tool label="Superscript"><Script /></Tool>
            <Tool label="Subscript"><Script down /></Tool>
          </Group>
          <Group className="ml-2">
            <Tool label="Character spacing"><Kerning /></Tool>
            <Drop label="Character spacing menu" />
          </Group>
          <Group className="ml-[17px]">
            <Tool label="Font color"><FontColor /></Tool>
            <Drop label="Font color menu" />
          </Group>
          <Group className="ml-[5px]">
            <Tool label="Highlighting"><Highlight /></Tool>
            <Drop label="Highlighting menu" />
          </Group>
        </div>
      </div>

      <SectionHead title="Paragraph" open />
      <div className="flex flex-col pl-[6px]">
        <Group className="self-start">
          <Tool label="Align left" active><Align kind="left" /></Tool>
          <Tool label="Centered"><Align kind="center" /></Tool>
          <Tool label="Align right"><Align kind="right" /></Tool>
          <Tool label="Justified"><Align kind="justify" /></Tool>
        </Group>
        <div className="mt-[6px] flex gap-5">
          <Group>
            <Tool label="Bullets"><Bullets /></Tool>
            <Drop label="Bullets menu" />
            <Tool label="Numbering"><Numbering /></Tool>
            <Drop label="Numbering menu" />
          </Group>
          <Group>
            <button type="button" aria-label="Paragraph background" className="px-[3px]"><FillBucket /></button>
            <Drop label="Background menu" />
          </Group>
        </div>
        <div className="mt-[3px] grid grid-cols-[115px_1fr] text-black">
          <span className="leading-[17px]"><span className="underline">S</span>pacing:</span>
          <span className="leading-[17px]"><span className="underline">I</span>ndent:</span>
          <Group className="justify-self-start">
            <Tool label="Increase spacing"><ParaSpacing /></Tool>
            <Tool label="Decrease spacing"><ParaSpacing dec /></Tool>
          </Group>
          <Group className="justify-self-start">
            <Tool label="Increase indent"><Indent dir="in" /></Tool>
            <Tool label="Decrease indent"><Indent dir="out" /></Tool>
            <button type="button" aria-label="Hanging indent" className="px-[3px]"><HangIndent /></button>
          </Group>
        </div>
        <div className="mt-3 grid grid-cols-[115px_1fr] items-start gap-y-[7px]">
          <div className="flex items-center gap-[3px]"><SpaceAbove /><Spin label="Above paragraph" className="w-[88px]" /></div>
          <div className="flex items-center gap-[3px]"><BeforeText /><Spin label="Before text" className="w-[82px]" /></div>
          <div className="flex items-center gap-[3px]"><SpaceAbove below /><Spin label="Below paragraph" className="w-[88px]" /></div>
          <div className="flex items-center gap-[3px]"><BeforeText after /><Spin label="After text" className="w-[82px]" /></div>
          <Group className="justify-self-start">
            <Tool label="Line spacing"><LineSpacing /></Tool>
            <Drop label="Line spacing menu" />
          </Group>
          <div className="flex items-center gap-[3px] pt-px"><FirstLine /><Spin label="First line" className="w-[82px]" /></div>
        </div>
      </div>

      <SectionHead title="Page" className="mt-[9px] border-b border-[#dedede]" />
    </section>
  );
}

function Sidebar() {
  const [tab, setTab] = useState("Properties");
  const tabs = [
    ["Properties", Cubes],
    ["Styles", StylesTab],
    ["Gallery", GalleryTab],
    ["Navigator", NavigatorTab],
  ];
  return (
    <aside className="flex shrink-0 border border-t-0 border-[#999] bg-[#efefef]">
      <Properties />
      <div className="flex w-[39px] flex-col items-center gap-[3px] pl-px pt-[7px]">
        <button type="button" aria-label="Sidebar menu" className="grid h-6 w-8 place-items-center">
          <Svg w={12} h={10}><path d="M1 1.500h7M1 4h7M1 6.500h7" stroke="#333f55" /><path d="M6 7h5L8.500 10z" fill="#111" /></Svg>
        </button>
        <span className="mb-px mt-px h-px w-8 bg-[#dcdcdc]" />
        {tabs.map(([name, Icon]) => (
          <button
            key={name}
            type="button"
            aria-label={name}
            onClick={() => setTab(name)}
            className={`grid h-8 w-8 place-items-center rounded border ${tab === name ? "border-[#a8a8a8] bg-[#e6e6e6]" : "border-transparent"}`}
          >
            <Icon />
          </button>
        ))}
      </div>
    </aside>
  );
}

/* ---------- status bar ---------- */

const cell = "flex items-start border-r border-[#9c9c9c] pl-1";

function StatusBar() {
  return (
    <footer className="h-[18px] shrink-0 overflow-hidden border-t border-white bg-[#f0f0f0] text-black">
      <div className="flex h-[26px] pt-1 leading-[18px]">
        <span className={`${cell} w-[224px]`}>Page 1 / 1</span>
        <span className={`${cell} w-[210px]`}>Default</span>
        <span className="w-[243px] border-r border-[#9c9c9c] pr-1 text-center">English (USA)</span>
        <button type="button" className={`${cell} w-[45px]`}>INSRT</button>
        <button type="button" className={`${cell} w-[34px]`}>STD</button>
        <span className={`${cell} w-4`}>*</span>
        <span className={`${cell} w-[29px]`} />
        <span className="flex-1" />
        <div className="flex gap-2 border-l border-[#9c9c9c] pl-[7px] pr-[10px] pt-[2px]">
          <button type="button" aria-label="Single page" className="self-start">
            <Svg w={9} h={12}><path d="M.5.500h5l3 3v8h-8z" fill="#f4f7f9" stroke="#6f7f8b" /><path d="M5.500.5v3h3" stroke="#6f7f8b" /></Svg>
          </button>
          <button type="button" aria-label="Multiple pages" className="self-start">
            <Svg w={20} h={12}><path d="M.5.500h5l3 3v8h-8zM10.500.500h5l3 3v8h-8z" fill="#cfe2f7" stroke="#2360a8" /><path d="M5.500.5v3h3M15.500.5v3h3" stroke="#2360a8" /></Svg>
          </button>
          <button type="button" aria-label="Book view" className="self-start">
            <Svg w={17} h={12}><path d="M8.500.5h-5l-3 3v8h8zM8.500.5h5l3 3v8h-8z" fill="#f4f7f9" stroke="#6f7f8b" /><path d="M3.500.5v3h-3M13.500.5v3h3" stroke="#6f7f8b" /></Svg>
          </button>
        </div>
        <div className="flex items-start gap-[5px] border-l border-[#9c9c9c] px-1 pt-[3px]">
          <button type="button" aria-label="Zoom out">
            <Svg w={12} h={12}><circle cx="6" cy="6" r="5" fill="#b8dcf5" stroke="#2c5a84" /><path d="M3 6h6" stroke="#16385a" strokeWidth="1.500" /></Svg>
          </button>
          <div className="relative h-3 w-[98px]">
            <svg width="98" height="12" className="block" aria-hidden="true">
              <path d="M1 5.500h97M1.500 5v3M17.500 1v10M49.500 1v10" stroke="#7d7d7d" />
            </svg>
            <input
              type="range"
              aria-label="Zoom"
              min="0"
              max="100"
              defaultValue="42"
              className="absolute inset-0 h-3 w-full appearance-none bg-transparent [&::-webkit-slider-thumb]:h-2 [&::-webkit-slider-thumb]:w-2 [&::-webkit-slider-thumb]:appearance-none [&::-webkit-slider-thumb]:rounded-full [&::-webkit-slider-thumb]:border [&::-webkit-slider-thumb]:border-[#1c3f5c] [&::-webkit-slider-thumb]:bg-[#4f86ac]"
            />
          </div>
          <button type="button" aria-label="Zoom in">
            <Svg w={12} h={12}><circle cx="6" cy="6" r="5" fill="#b8dcf5" stroke="#2c5a84" /><path d="M3 6h6M6 3v6" stroke="#16385a" strokeWidth="1.500" /></Svg>
          </button>
        </div>
        <span className="w-10 border-l border-[#9c9c9c] pl-1">90 %</span>
      </div>
    </footer>
  );
}

export default function App() {
  return (
    <div className="flex h-screen flex-col overflow-hidden bg-[#f0f0f0] font-['Open_Sans','Noto_Sans',sans-serif] text-xs">
      <TitleBar />
      <MenuBar />
      <div className="shrink-0 border-b-2 border-[#77777b] bg-gradient-to-b from-[#d3d9ec] via-[#d3d9ec] via-60% to-[#e1e6f4]">
        <StandardBar />
        <FormatBar />
      </div>
      <div className="flex min-h-0 flex-1">
        <Editor />
        <VScroll />
        <div className="grid w-[10px] shrink-0 place-items-center border-l border-white">
          <Svg w={4} h={34}>
            <path d="M1 0v4l2-2zM1 30v4l2-2z" fill="#555" />
            <path d="M1.500 8v20" stroke="#888" strokeDasharray="1 2" />
          </Svg>
        </div>
        <Sidebar />
      </div>
      <StatusBar />
    </div>
  );
}
